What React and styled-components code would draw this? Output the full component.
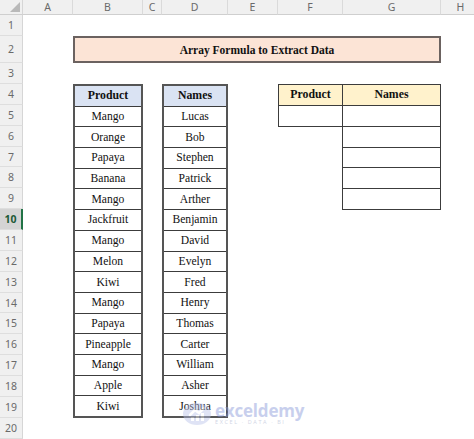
import styled, { createGlobalStyle } from "styled-components";

const GlobalStyle = createGlobalStyle`
  body {
    margin: 0;
    background: #ffffff;
    overflow: hidden;
  }
`;

const ROW_H = 20.87;
const rowHeights = [15, 21, 27, 21, ...Array(17).fill(ROW_H)];
const columns = ["A", "B", "C", "D", "E", "F", "G", "H"];
const colWidths = [23, 50, 70, 19, 66, 50, 65, 98, 40];

const products = [
  "Mango", "Orange", "Papaya", "Banana", "Mango", "Jackfruit", "Mango",
  "Melon", "Kiwi", "Mango", "Papaya", "Pineapple", "Mango", "Apple", "Kiwi",
];
const names = [
  "Lucas", "Bob", "Stephen", "Patrick", "Arther", "Benjamin", "David",
  "Evelyn", "Fred", "Henry", "Thomas", "Carter", "William", "Asher", "Joshua",
];

const Sheet = styled.div`
  position: relative;
  display: grid;
  grid-template-columns: ${colWidths.map((w) => w + "px").join(" ")};
  grid-template-rows: ${rowHeights.map((h) => h + "px").join(" ")};
  width: 474px;
  height: 439px;
  overflow: hidden;
  font-family: "Liberation Serif", "Times New Roman", serif;
`;

const Corner = styled.div`
  grid-column: 1;
  grid-row: 1;
  position: relative;
  background: #f0f0f0;
  border-right: 1px solid #d6d6d6;
  border-bottom: 1px solid #cfcfcf;

  &::after {
    content: "";
    position: absolute;
    right: 2px;
    bottom: 2px;
    border-style: solid;
    border-width: 0 0 10px 10px;
    border-color: transparent transparent #b9b9b9 transparent;
  }
`;

const ColHead = styled.div`
  grid-column: ${({ $col }) => $col};
  grid-row: 1;
  display: flex;
  align-items: center;
  justify-content: center;
  background: #f0f0f0;
  border-right: 1px solid #dadada;
  border-bottom: 1px solid #cfcfcf;
  color: #6a6a6a;
  font-family: "Noto Sans", "Liberation Sans", sans-serif;
  font-size: 10.5px;
`;

const RowHead = styled.div`
  grid-column: 1;
  grid-row: ${({ $row }) => $row};
  display: flex;
  align-items: center;
  justify-content: center;
  background: ${({ $active }) => ($active ? "#d4d4d4" : "#f0f0f0")};
  border-bottom: 1px solid #dedede;
  border-right: ${({ $active }) =>
    $active ? "2px solid #217346" : "1px solid #d6d6d6"};
  color: ${({ $active }) => ($active ? "#1d5a36" : "#6a6a6a")};
  font-weight: ${({ $active }) => ($active ? 700 : 400)};
  font-family: "Noto Sans", "Liberation Sans", sans-serif;
  font-size: 10.5px;
`;

const Title = styled.div`
  grid-column: 3 / 9;
  grid-row: 3;
  display: flex;
  align-items: center;
  justify-content: center;
  background: #fce4d6;
  border: 2px solid #6b6260;
  font-weight: 700;
  font-size: 11.5px;
  color: #111;
`;

const Table = styled.div`
  grid-column: ${({ $col }) => $col};
  grid-row: 5 / ${({ $rows }) => 5 + $rows};
  display: flex;
  flex-direction: column;
  border: 2px solid #555;
  align-self: start;
  height: ${({ $rows }) => $rows * ROW_H}px;
  box-sizing: border-box;
  position: relative;
  z-index: 1;
`;

const Cell = styled.div`
  flex: 1;
  display: flex;
  align-items: center;
  justify-content: center;
  border-top: 1px solid #3c3c3c;
  background: ${({ $fill }) => $fill || "#ffffff"};
  font-size: ${({ $head }) => ($head ? "11.8px" : "11.6px")};
  font-weight: ${({ $head }) => ($head ? 700 : 400)};
  color: #111;

  &:first-child {
    border-top: none;
  }
`;

const SideTable = styled.div`
  grid-column: 7 / 9;
  grid-row: 5 / 11;
  display: grid;
  grid-template-columns: 65px 98px;
  grid-template-rows: repeat(6, ${ROW_H}px);
  position: relative;
  z-index: 1;
`;

const SideCell = styled.div`
  grid-column: ${({ $col }) => $col};
  grid-row: ${({ $row }) => $row};
  display: flex;
  align-items: center;
  justify-content: center;
  background: ${({ $fill }) => $fill || "#ffffff"};
  border: 1px solid #3c3c3c;
  margin: 0 0 -1px ${({ $col }) => ($col === 2 ? "-1px" : "0")};
  font-size: 11.8px;
  font-weight: 700;
  color: #111;
`;

const Watermark = styled.div`
  position: absolute;
  left: 182px;
  top: 402px;
  display: flex;
  align-items: center;
  gap: 3px;
  z-index: 2;
  opacity: 0.45;
`;

const Brand = styled.div`
  display: flex;
  flex-direction: column;
  line-height: 1;
`;

const BrandName = styled.span`
  font-family: "Open Sans", "Noto Sans", sans-serif;
  font-weight: 700;
  font-size: 17px;
  color: #8797d8;
  letter-spacing: -0.2px;
`;

const BrandSub = styled.span`
  font-family: "Open Sans", "Noto Sans", sans-serif;
  font-size: 5.5px;
  letter-spacing: 1.6px;
  color: #9aa3c4;
  margin-top: 1px;
`;

function Logo() {
  return (
    <svg width="30" height="24" viewBox="0 0 30 24">
      <ellipse cx="15" cy="12" rx="14" ry="11" fill="#b9c3ea" />
      <path
        d="M8 13 L13 8 L17 11 L22 6"
        stroke="#ffffff"
        strokeWidth="2.5"
        fill="none"
        strokeLinecap="round"
      />
      <rect x="9" y="15" width="3" height="4" fill="#ffffff" />
      <rect x="14" y="13" width="3" height="6" fill="#ffffff" />
      <rect x="19" y="11" width="3" height="8" fill="#ffffff" />
    </svg>
  );
}

export default function App() {
  return (
    <>
      <GlobalStyle />
      <Sheet>
        <Corner />
        {columns.map((c, i) => (
          <ColHead key={c} $col={i + 2}>
            {c}
          </ColHead>
        ))}
        <ColHead $col={10} />
        {rowHeights.slice(1).map((_, i) => (
          <RowHead key={i} $row={i + 2} $active={i + 1 === 10}>
            {i + 1}
          </RowHead>
        ))}

        <Title>Array Formula to Extract Data</Title>

        <Table $col={3} $rows={16}>
          <Cell $head $fill="#dae3f3">Product</Cell>
          {products.map((p, i) => (
            <Cell key={i}>{p}</Cell>
          ))}
        </Table>

        <Table $col={5} $rows={16}>
          <Cell $head $fill="#dae3f3">Names</Cell>
          {names.map((n, i) => (
            <Cell key={i}>{n}</Cell>
          ))}
        </Table>

        <SideTable>
          <SideCell $col={1} $row={1} $fill="#fff2cc">Product</SideCell>
          <SideCell $col={2} $row={1} $fill="#fff2cc">Names</SideCell>
          <SideCell $col={1} $row={2} />
          {[2, 3, 4, 5, 6].map((r) => (
            <SideCell key={r} $col={2} $row={r} />
          ))}
        </SideTable>

        <Watermark>
          <Logo />
          <Brand>
            <BrandName>exceldemy</BrandName>
            <BrandSub>EXCEL · DATA · BI</BrandSub>
          </Brand>
        </Watermark>
      </Sheet>
    </>
  );
}
